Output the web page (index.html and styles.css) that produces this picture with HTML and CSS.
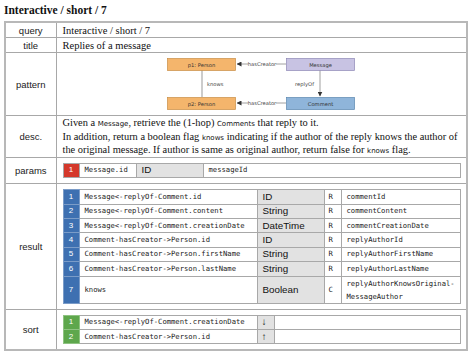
FILE: index.html
```html
<!DOCTYPE html>
<html>
<head>
<meta charset="utf-8">
<link rel="stylesheet" href="styles.css">
</head>
<body>
<div class="heading">Interactive / short / 7</div>
<table class="card">
  <colgroup><col class="c-label"><col></colgroup>
  <tr class="r-query"><td class="label">query</td><td class="val">Interactive / short / 7</td></tr>
  <tr class="r-title"><td class="label">title</td><td class="val">Replies of a message</td></tr>
  <tr class="r-pattern"><td class="label">pattern</td><td class="val pattern">
    <svg class="diagram" width="200" height="60" viewBox="0 0 200 60">
      <defs>
        <marker id="ah" markerWidth="5" markerHeight="5" refX="4.5" refY="2.5" orient="auto" markerUnits="userSpaceOnUse">
          <path d="M0,0 L5,2.5 L0,5 Z" fill="#333"/>
        </marker>
      </defs>
      <line x1="125" y1="10" x2="76" y2="10" stroke="#888" stroke-width="0.8" marker-end="url(#ah)"/>
      <line x1="125" y1="49" x2="76" y2="49" stroke="#888" stroke-width="0.8" marker-end="url(#ah)"/>
      <line x1="41" y1="16" x2="41" y2="43" stroke="#aaa" stroke-width="1.2"/>
      <line x1="159" y1="16" x2="159" y2="42" stroke="#888" stroke-width="0.8" marker-end="url(#ah)"/>
      <rect x="87" y="6.5" width="28" height="7" fill="#fff"/>
      <rect x="87" y="45.5" width="28" height="7" fill="#fff"/>
      <text x="101" y="12" class="lbl" text-anchor="middle">hasCreator</text>
      <text x="101" y="51" class="lbl" text-anchor="middle">hasCreator</text>
      <text x="46" y="32" class="lbl">knows</text>
      <text x="153" y="32" class="lbl" text-anchor="end">replyOf</text>
      <rect x="6.5" y="4.5" width="68" height="12" fill="#f4b56c" stroke="#c98d45" stroke-width="0.7"/>
      <rect x="125.5" y="4.5" width="68" height="12" fill="#c8c3e3" stroke="#8e88b5" stroke-width="0.7"/>
      <rect x="6.5" y="43.5" width="68" height="12" fill="#f4b56c" stroke="#c98d45" stroke-width="0.7"/>
      <rect x="125.5" y="43.5" width="68" height="12" fill="#8fb5da" stroke="#5a86b0" stroke-width="0.7"/>
      <text x="40.5" y="12.5" class="nt" text-anchor="middle">p1: Person</text>
      <text x="159.5" y="12.5" class="nt" text-anchor="middle">Message</text>
      <text x="40.5" y="51.5" class="nt" text-anchor="middle">p2: Person</text>
      <text x="159.5" y="51.5" class="nt" text-anchor="middle">Comment</text>
    </svg>
  </td></tr>
  <tr class="r-desc"><td class="label">desc.</td><td class="val desc">Given a <span class="sf">Message</span>, retrieve the (1-hop) <span class="sf">Comments</span> that reply to it.<br>In addition, return a boolean flag <span class="sf">knows</span> indicating if the author of the reply knows the author of the original message. If author is same as original author, return false for <span class="sf">knows</span> flag.</td></tr>
  <tr class="r-params"><td class="label">params</td><td class="val inner">
    <table class="sub">
      <colgroup><col class="w-badge"><col class="w-ppath"><col class="w-type"><col></colgroup>
      <tr><td class="badge red">1</td><td class="mono">Message.id</td><td class="type">ID</td><td class="mono">messageId</td></tr>
    </table>
  </td></tr>
  <tr class="r-result"><td class="label">result</td><td class="val inner">
    <table class="sub">
      <colgroup><col class="w-badge"><col class="w-path"><col class="w-type"><col class="w-r"><col></colgroup>
      <tr><td class="badge blue">1</td><td class="mono">Message&lt;-replyOf-Comment.id</td><td class="type">ID</td><td class="mono rc">R</td><td class="mono">commentId</td></tr>
      <tr><td class="badge blue">2</td><td class="mono">Message&lt;-replyOf-Comment.content</td><td class="type">String</td><td class="mono rc">R</td><td class="mono">commentContent</td></tr>
      <tr><td class="badge blue">3</td><td class="mono">Message&lt;-replyOf-Comment.creationDate</td><td class="type">DateTime</td><td class="mono rc">R</td><td class="mono">commentCreationDate</td></tr>
      <tr><td class="badge blue">4</td><td class="mono">Comment-hasCreator-&gt;Person.id</td><td class="type">ID</td><td class="mono rc">R</td><td class="mono">replyAuthorId</td></tr>
      <tr><td class="badge blue">5</td><td class="mono">Comment-hasCreator-&gt;Person.firstName</td><td class="type">String</td><td class="mono rc">R</td><td class="mono">replyAuthorFirstName</td></tr>
      <tr><td class="badge blue">6</td><td class="mono">Comment-hasCreator-&gt;Person.lastName</td><td class="type">String</td><td class="mono rc">R</td><td class="mono">replyAuthorLastName</td></tr>
      <tr class="tall"><td class="badge blue">7</td><td class="mono">knows</td><td class="type">Boolean</td><td class="mono rc">C</td><td class="mono two">replyAuthorKnowsOriginal-<br>MessageAuthor</td></tr>
    </table>
  </td></tr>
  <tr class="r-sort"><td class="label">sort</td><td class="val inner">
    <table class="sub">
      <colgroup><col class="w-badge"><col class="w-path"><col class="w-r"><col></colgroup>
      <tr><td class="badge green">1</td><td class="mono">Message&lt;-replyOf-Comment.creationDate</td><td class="type arrow">↓</td><td></td></tr>
      <tr><td class="badge green">2</td><td class="mono">Comment-hasCreator-&gt;Person.id</td><td class="type arrow">↑</td><td></td></tr>
    </table>
  </td></tr>
</table>
</body>
</html>
```

FILE: styles.css
```css
html, body {
  margin: 0;
  padding: 0;
  background: #fff;
}
body {
  width: 474px;
  height: 353px;
  overflow: hidden;
  font-family: "Liberation Serif", "Times New Roman", serif;
  color: #111;
}
.heading {
  font-weight: bold;
  font-size: 11.5px;
  line-height: 14px;
  padding: 3px 0 0 4px;
}
.card {
  margin: 4px 0 0 4px;
  width: 464px;
  border-collapse: collapse;
  table-layout: fixed;
  border: 2px solid #b8b8b8;
}
.card > tbody > tr > td,
.card > tr > td {
  border: 1px solid #a8a8a8;
  padding: 0;
}
.c-label { width: 51px; }
.label {
  font-family: "Liberation Sans", Arial, sans-serif;
  font-size: 9.5px;
  text-align: center;
  vertical-align: middle;
  color: #222;
}
.val {
  font-size: 10.5px;
  padding-left: 6px !important;
  line-height: 13px;
}
.r-query > td, .r-title > td { height: 14px; }
.r-pattern > td { height: 62px; }
.pattern {
  text-align: center;
  padding-left: 0 !important;
}
.diagram {
  display: block;
  margin: 0 auto;
}
.lbl {
  font-family: "DejaVu Sans", sans-serif;
  font-size: 5.2px;
  fill: #444;
}
.nt {
  font-family: "DejaVu Sans", sans-serif;
  font-size: 5.2px;
  fill: #333;
}
.desc {
  padding: 0 2px 0 6px !important;
  line-height: 13.6px;
  font-size: 10.4px;
  height: 40px;
}
.sf {
  font-family: "DejaVu Sans", sans-serif;
  font-size: 7px;
  line-height: 1;
}
.inner {
  padding: 5px 5px 5px 6px !important;
}
.sub {
  width: 100%;
  border-collapse: collapse;
  table-layout: fixed;
  border: 1.5px solid #a0a0a0;
}
.sub td {
  border: 1px solid #a8a8a8;
  height: 13.4px;
  line-height: 12px;
  padding: 0;
  vertical-align: middle;
  white-space: nowrap;
}
.sub .tall td { height: 26px; }
.w-badge { width: 16px; }
.w-ppath { width: 57px; }
.w-path { width: 178px; }
.w-type { width: 67px; }
.w-r { width: 17px; }
.badge {
  font-family: "Liberation Sans", Arial, sans-serif;
  font-size: 8px;
  color: #fff;
  text-align: center;
}
.red { background: #d4382b; }
.blue { background: #3e70b1; border-color: #7b9cc8 !important; }
.green { background: #5ea74c; border-color: #8fc382 !important; }
.mono {
  font-family: "DejaVu Sans Mono", "Liberation Mono", monospace;
  font-size: 7.2px;
  padding-left: 5px !important;
  color: #222;
}
.rc { padding-left: 4px !important; }
.sub td.two { line-height: 13px; }
.type {
  background: #e2e2e2;
  font-family: "Liberation Sans", Arial, sans-serif;
  font-size: 9.8px;
  padding-left: 5px !important;
  color: #111;
}
.arrow {
  padding-left: 4px !important;
  font-size: 10px;
}
```
